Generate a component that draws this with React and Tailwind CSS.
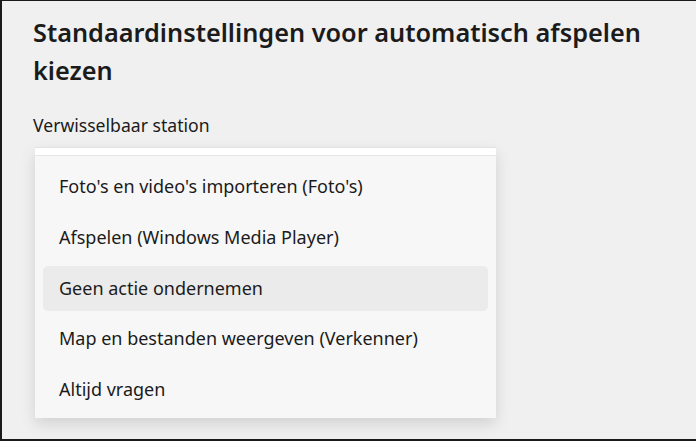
const items = [
  'Foto\'s en video\'s importeren (Foto\'s)',
  'Afspelen (Windows Media Player)',
  'Geen actie ondernemen',
  'Map en bestanden weergeven (Verkenner)',
  'Altijd vragen',
]

export default function App() {
  return (
    <div className="h-[441px] w-[696px] overflow-hidden border-t border-l-2 border-b-2 border-[#1a1a1a] bg-[#f0f0f0] font-['Noto_Sans',sans-serif] text-[#1b1b1b]">
      <div className="pl-[31px] pt-[12px]">
        <h1 className="text-[25.3px] font-semibold leading-[38px]">
          Standaardinstellingen voor automatisch afspelen
          <br />
          kiezen
        </h1>
        <p className="mt-[24px] text-[17.6px] leading-[24px]">Verwisselbaar station</p>
        <div className="relative mt-[10px] ml-[2px] w-[461px] border-t border-[#e2e2e2] bg-white pt-[7px] shadow-[0_6px_14px_rgba(0,0,0,0.13)]">
          <div className="flex flex-col gap-[5.75px] border-t border-[#e6e6e6] bg-[#f7f7f7] px-[8px] pt-[8px] pb-[6px]">
            {items.map((label, i) => (
              <div
                key={label}
                className={`flex h-[45px] items-center rounded-[5px] px-[16px] text-[18px] ${
                  i === 2 ? 'bg-[#ebebeb]' : ''
                }`}
              >
                {label}
              </div>
            ))}
          </div>
        </div>
      </div>
    </div>
  )
}
